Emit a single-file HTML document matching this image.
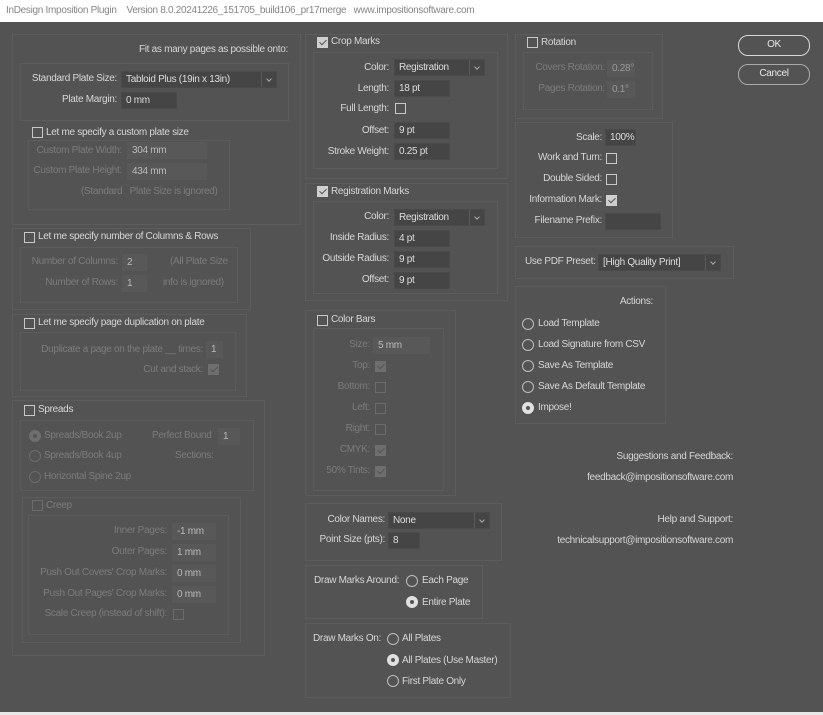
<!DOCTYPE html>
<html><head><meta charset="utf-8"><style>
*{box-sizing:border-box;margin:0;padding:0}
body{width:823px;height:715px;background:#535353;position:relative;overflow:hidden;font-family:"Liberation Sans",sans-serif;font-size:10px;letter-spacing:-0.3px;color:#d6d6d6}
#tb{position:absolute;left:0;top:0;width:823px;height:22px;background:#fff;color:#858585;font-size:10px;line-height:22px;padding-left:6px;white-space:pre}
#bs{position:absolute;left:0;top:712px;width:823px;height:3px;background:#e8e8e8}
.p{position:absolute;border:1px solid #5c5c5c}
.t{position:absolute;line-height:14px;white-space:nowrap}
.r{text-align:right}
.d{color:#7c7c7c}
.f{position:absolute;background:#454545;border:1px solid #4a4a4a;color:#ddd;line-height:15px;padding-left:4px;height:17px;white-space:nowrap}
.fd{background:#585858;border-color:#585858;color:#7e7e7e}
.s:after{content:"";position:absolute;right:0;top:0;width:14px;height:15px;border-left:1px solid #5a5a5a}
.s:before{content:"";position:absolute;right:5px;top:5px;width:3px;height:3px;border:solid #aaa;border-width:0 1px 1px 0;transform:rotate(45deg)}
.c{position:absolute;width:11px;height:11px;border:1px solid #c8c8c8;background:#535353}
.cd{border-color:#6c6c6c}
.ck{background:#cfcfcf;border-color:#cfcfcf}
.ck:after{content:"";position:absolute;left:3px;top:0px;width:3px;height:6px;border:solid #555;border-width:0 1.5px 1.5px 0;transform:rotate(45deg)}
.ckd{background:#6e6e6e;border-color:#6e6e6e}
.rd{position:absolute;width:12px;height:12px;border:1px solid #bdbdbd;border-radius:50%}
.rdd{border-color:#6c6c6c}
.on{background:#e0e0e0;border-color:#e0e0e0}
.on:after{content:"";position:absolute;left:3px;top:3px;width:4px;height:4px;border-radius:50%;background:#555}
.ond{background:#6e6e6e;border-color:#6e6e6e}
.btn{position:absolute;border:1.5px solid #d8d8d8;border-radius:10px;text-align:center;line-height:17px;color:#e8e8e8}
</style></head><body>
<div id="tb">InDesign Imposition Plugin    Version 8.0.20241226_151705_build106_pr17merge   www.impositionsoftware.com</div>

<!-- LEFT COLUMN -->
<div class="p" style="left:12px;top:34px;width:289px;height:191px"></div>
<div class="t r" style="right:535px;top:43px">Fit as many pages as possible onto:</div>
<div class="p" style="left:20px;top:63px;width:269px;height:58px"></div>
<div class="t r" style="right:706px;top:72px">Standard Plate Size:</div>
<div class="f s" style="left:121px;top:71px;width:156px">Tabloid Plus (19in x 13in)</div>
<div class="t r" style="right:706px;top:93px">Plate Margin:</div>
<div class="f" style="left:121px;top:92px;width:56px">0 mm</div>
<div class="c" style="left:32px;top:127px"></div>
<div class="t" style="left:46px;top:126px">Let me specify a custom plate size</div>
<div class="p" style="left:28px;top:140px;width:202px;height:70px"></div>
<div class="t r d" style="right:701px;top:144px">Custom Plate Width:</div>
<div class="f fd" style="left:127px;top:142px;width:80px;color:#bbb">304 mm</div>
<div class="t r d" style="right:701px;top:164px">Custom Plate Height:</div>
<div class="f fd" style="left:127px;top:163px;width:80px;color:#bbb">434 mm</div>
<div class="t d" style="left:81px;top:185px;white-space:pre">(Standard   Plate Size is ignored)</div>

<div class="p" style="left:12px;top:228px;width:239px;height:82px"></div>
<div class="c" style="left:24px;top:232px"></div>
<div class="t" style="left:38px;top:230px">Let me specify number of Columns &amp; Rows</div>
<div class="p" style="left:20px;top:247px;width:218px;height:56px"></div>
<div class="t r d" style="right:705px;top:255px">Number of Columns:</div>
<div class="f fd" style="left:122px;top:254px;width:25px;color:#bbb">2</div>
<div class="t d" style="left:170px;top:255px">(All Plate Size</div>
<div class="t r d" style="right:705px;top:276px">Number of Rows:</div>
<div class="f fd" style="left:122px;top:275px;width:25px;color:#bbb">1</div>
<div class="t d" style="left:163px;top:276px">info is ignored)</div>

<div class="p" style="left:12px;top:314px;width:235px;height:83px"></div>
<div class="c" style="left:24px;top:318px"></div>
<div class="t" style="left:38px;top:316px">Let me specify page duplication on plate</div>
<div class="p" style="left:20px;top:332px;width:216px;height:59px"></div>
<div class="t r d" style="right:620px;top:343px">Duplicate a page on the plate __ times:</div>
<div class="f fd" style="left:206px;top:341px;width:17px;color:#bbb">1</div>
<div class="t r d" style="right:620px;top:363px">Cut and stack:</div>
<div class="c ckd ck" style="left:208px;top:364px"></div>

<div class="p" style="left:12px;top:400px;width:253px;height:256px"></div>
<div class="c" style="left:24px;top:405px"></div>
<div class="t" style="left:38px;top:403px">Spreads</div>
<div class="p" style="left:20px;top:420px;width:234px;height:71px"></div>
<div class="rd ond on" style="left:29px;top:430px"></div>
<div class="t d" style="left:44px;top:429px">Spreads/Book 2up</div>
<div class="t d" style="left:152px;top:429px">Perfect Bound</div>
<div class="f fd" style="left:218px;top:428px;width:22px;color:#bbb">1</div>
<div class="rd rdd" style="left:29px;top:450px"></div>
<div class="t d" style="left:44px;top:449px">Spreads/Book 4up</div>
<div class="t d" style="left:175px;top:449px">Sections:</div>
<div class="rd rdd" style="left:29px;top:471px"></div>
<div class="t d" style="left:44px;top:470px">Horizontal Spine 2up</div>

<div class="p" style="left:22px;top:497px;width:219px;height:146px"></div>
<div class="c cd" style="left:32px;top:500px"></div>
<div class="t d" style="left:46px;top:499px">Creep</div>
<div class="p" style="left:28px;top:515px;width:201px;height:120px"></div>
<div class="t r d" style="right:656px;top:524px">Inner Pages:</div>
<div class="f fd" style="left:172px;top:523px;width:44px;color:#bbb">-1 mm</div>
<div class="t r d" style="right:656px;top:545px">Outer Pages:</div>
<div class="f fd" style="left:172px;top:544px;width:44px;color:#bbb">1 mm</div>
<div class="t r d" style="right:656px;top:566px">Push Out Covers' Crop Marks:</div>
<div class="f fd" style="left:172px;top:565px;width:44px;color:#bbb">0 mm</div>
<div class="t r d" style="right:656px;top:587px">Push Out Pages' Crop Marks:</div>
<div class="f fd" style="left:172px;top:586px;width:44px;color:#bbb">0 mm</div>
<div class="t r d" style="right:656px;top:607px">Scale Creep (instead of shift):</div>
<div class="c cd" style="left:173px;top:609px"></div>

<!-- MIDDLE COLUMN -->
<div class="p" style="left:305px;top:34px;width:203px;height:145px"></div>
<div class="c ck" style="left:317px;top:37px"></div>
<div class="t" style="left:331px;top:35px">Crop Marks</div>
<div class="p" style="left:313px;top:52px;width:185px;height:117px"></div>
<div class="t r" style="right:434px;top:61px">Color:</div>
<div class="f s" style="left:394px;top:59px;width:91px">Registration</div>
<div class="t r" style="right:434px;top:82px">Length:</div>
<div class="f" style="left:394px;top:80px;width:56px">18 pt</div>
<div class="t r" style="right:434px;top:102px">Full Length:</div>
<div class="c" style="left:395px;top:103px"></div>
<div class="t r" style="right:434px;top:124px">Offset:</div>
<div class="f" style="left:394px;top:122px;width:56px">9 pt</div>
<div class="t r" style="right:434px;top:145px">Stroke Weight:</div>
<div class="f" style="left:394px;top:143px;width:56px">0.25 pt</div>

<div class="p" style="left:305px;top:183px;width:203px;height:118px"></div>
<div class="c ck" style="left:317px;top:186px"></div>
<div class="t" style="left:331px;top:185px">Registration Marks</div>
<div class="p" style="left:313px;top:201px;width:185px;height:93px"></div>
<div class="t r" style="right:434px;top:210px">Color:</div>
<div class="f s" style="left:394px;top:209px;width:91px">Registration</div>
<div class="t r" style="right:434px;top:231px">Inside Radius:</div>
<div class="f" style="left:394px;top:230px;width:56px">4 pt</div>
<div class="t r" style="right:434px;top:252px">Outside Radius:</div>
<div class="f" style="left:394px;top:251px;width:56px">9 pt</div>
<div class="t r" style="right:434px;top:273px">Offset:</div>
<div class="f" style="left:394px;top:272px;width:56px">9 pt</div>

<div class="p" style="left:305px;top:310px;width:151px;height:186px"></div>
<div class="c" style="left:317px;top:315px"></div>
<div class="t" style="left:331px;top:313px">Color Bars</div>
<div class="p" style="left:313px;top:328px;width:131px;height:163px"></div>
<div class="t r d" style="right:453px;top:338px">Size:</div>
<div class="f fd" style="left:373px;top:337px;width:57px;color:#bbb">5 mm</div>
<div class="t r d" style="right:453px;top:359px">Top:</div>
<div class="c ckd ck" style="left:375px;top:361px"></div>
<div class="t r d" style="right:453px;top:380px">Bottom:</div>
<div class="c cd" style="left:375px;top:382px"></div>
<div class="t r d" style="right:453px;top:401px">Left:</div>
<div class="c cd" style="left:375px;top:403px"></div>
<div class="t r d" style="right:453px;top:422px">Right:</div>
<div class="c cd" style="left:375px;top:424px"></div>
<div class="t r d" style="right:453px;top:443px">CMYK:</div>
<div class="c ckd ck" style="left:375px;top:445px"></div>
<div class="t r d" style="right:453px;top:464px">50% Tints:</div>
<div class="c ckd ck" style="left:375px;top:466px"></div>

<div class="p" style="left:305px;top:503px;width:197px;height:58px"></div>
<div class="t r" style="right:438px;top:513px">Color Names:</div>
<div class="f s" style="left:388px;top:512px;width:102px">None</div>
<div class="t r" style="right:438px;top:533px">Point Size (pts):</div>
<div class="f" style="left:388px;top:532px;width:32px">8</div>

<div class="p" style="left:305px;top:565px;width:178px;height:54px"></div>
<div class="t" style="left:314px;top:574px">Draw Marks Around:</div>
<div class="rd" style="left:406px;top:575px"></div>
<div class="t" style="left:422px;top:574px">Each Page</div>
<div class="rd on" style="left:406px;top:596px"></div>
<div class="t" style="left:422px;top:596px">Entire Plate</div>

<div class="p" style="left:305px;top:623px;width:206px;height:75px"></div>
<div class="t" style="left:313px;top:632px">Draw Marks On:</div>
<div class="rd" style="left:387px;top:633px"></div>
<div class="t" style="left:402px;top:632px">All Plates</div>
<div class="rd on" style="left:387px;top:654px"></div>
<div class="t" style="left:402px;top:654px">All Plates (Use Master)</div>
<div class="rd" style="left:387px;top:675px"></div>
<div class="t" style="left:402px;top:675px">First Plate Only</div>

<!-- RIGHT COLUMN -->
<div class="p" style="left:515px;top:34px;width:148px;height:85px"></div>
<div class="c" style="left:527px;top:37px"></div>
<div class="t" style="left:541px;top:36px">Rotation</div>
<div class="p" style="left:523px;top:52px;width:130px;height:58px"></div>
<div class="t r d" style="right:218px;top:61px">Covers Rotation:</div>
<div class="f fd" style="left:607px;top:60px;width:28px;color:#999">0.28°</div>
<div class="t r d" style="right:218px;top:82px">Pages Rotation:</div>
<div class="f fd" style="left:607px;top:81px;width:28px;color:#999">0.1°</div>

<div class="p" style="left:515px;top:122px;width:158px;height:116px"></div>
<div class="t r" style="right:221px;top:131px">Scale:</div>
<div class="f" style="left:605px;top:129px;width:31px">100%</div>
<div class="t r" style="right:221px;top:151px">Work and Turn:</div>
<div class="c" style="left:606px;top:153px"></div>
<div class="t r" style="right:221px;top:172px">Double Sided:</div>
<div class="c" style="left:606px;top:174px"></div>
<div class="t r" style="right:221px;top:193px">Information Mark:</div>
<div class="c ck" style="left:606px;top:195px"></div>
<div class="t r" style="right:221px;top:214px">Filename Prefix:</div>
<div class="f" style="left:605px;top:213px;width:56px"></div>

<div class="p" style="left:515px;top:246px;width:219px;height:33px"></div>
<div class="t" style="left:525px;top:255px">Use PDF Preset:</div>
<div class="f s" style="left:598px;top:254px;width:123px">[High Quality Print]</div>

<div class="p" style="left:515px;top:286px;width:151px;height:138px"></div>
<div class="t r" style="right:170px;top:295px">Actions:</div>
<div class="rd" style="left:522px;top:318px"></div>
<div class="t" style="left:538px;top:317px">Load Template</div>
<div class="rd" style="left:522px;top:339px"></div>
<div class="t" style="left:538px;top:338px">Load Signature from CSV</div>
<div class="rd" style="left:522px;top:360px"></div>
<div class="t" style="left:538px;top:359px">Save As Template</div>
<div class="rd" style="left:522px;top:381px"></div>
<div class="t" style="left:538px;top:380px">Save As Default Template</div>
<div class="rd on" style="left:522px;top:402px"></div>
<div class="t" style="left:538px;top:401px">Impose!</div>

<div class="t r" style="right:90px;top:450px">Suggestions and Feedback:</div>
<div class="t r" style="right:90px;top:471px">feedback@impositionsoftware.com</div>
<div class="t r" style="right:90px;top:513px">Help and Support:</div>
<div class="t r" style="right:90px;top:534px">technicalsupport@impositionsoftware.com</div>

<div class="btn" style="left:738px;top:35px;width:72px;height:21px">OK</div>
<div class="btn" style="left:738px;top:64px;width:72px;height:21px;border-color:#aaa">Cancel</div>

<div id="bs"></div>
</body></html>
